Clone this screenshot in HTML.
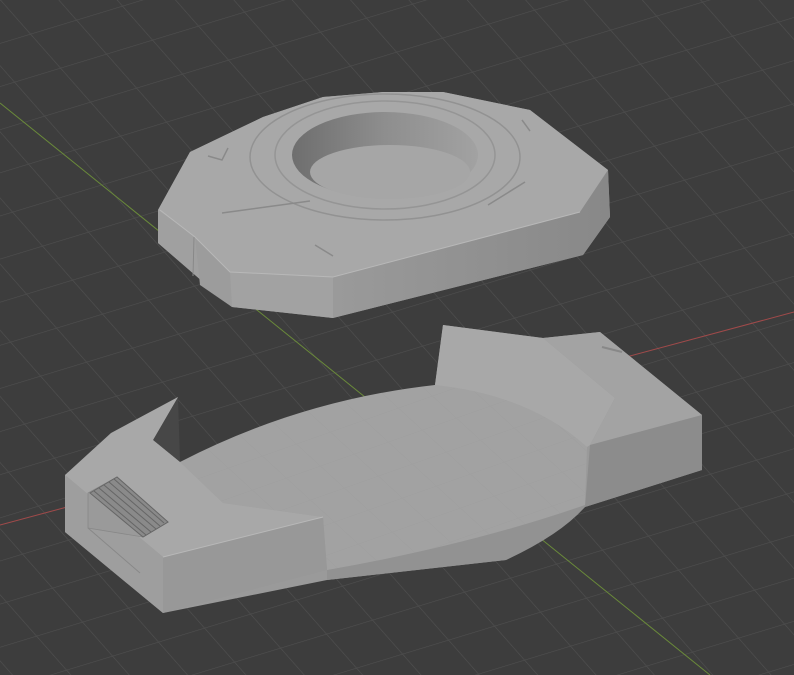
<!DOCTYPE html>
<html><head><meta charset="utf-8"><style>html,body{margin:0;padding:0;background:#3d3d3d;overflow:hidden}svg{display:block}</style></head>
<body>
<svg width="794" height="675" viewBox="0 0 794 675" xmlns="http://www.w3.org/2000/svg">
<defs>
<pattern id="g" width="40" height="40" patternUnits="userSpaceOnUse" patternTransform="matrix(1.15,-0.35,0.75,0.85,0,0)">
<path d="M0 0H40M0 0V40" stroke="#505050" stroke-width="1.1" fill="none"/>
</pattern>
<pattern id="fg" width="40" height="40" patternUnits="userSpaceOnUse" patternTransform="matrix(0.85,-0.3,0.6,0.55,0,0)">
<path d="M0 0H40M0 0V40" stroke="#999" stroke-width="1" fill="none"/>
</pattern>
<linearGradient id="wall" x1="0" x2="1"><stop offset="0" stop-color="#6e6e6e"/><stop offset="0.5" stop-color="#8e8e8e"/><stop offset="1" stop-color="#a2a2a2"/></linearGradient>
<linearGradient id="rside" x1="0" x2="1"><stop offset="0" stop-color="#9a9a9a"/><stop offset="1" stop-color="#888"/></linearGradient>
</defs>
<rect width="794" height="675" fill="#3d3d3d"/>
<rect width="794" height="675" fill="url(#g)"/>
<line x1="0" y1="103" x2="710" y2="675" stroke="#6a8a3a" stroke-width="1"/>
<line x1="0" y1="525" x2="794" y2="312" stroke="#a04a4a" stroke-width="1"/>

<!-- top object -->
<polygon points="158,210 190,152 263,117 323,97 383,92 443,92 530,110 608,170 610,217 583,255 333,318 232,307 158,243" fill="#9a9a9a"/>
<polygon points="158,210 190,152 263,117 323,97 383,92 443,92 530,110 608,170 580,212 333,277 230,272 195,237" fill="#a8a8a8"/>
<polygon points="158,210 195,237 230,272 232,307 158,243" fill="#a0a0a0"/>
<polygon points="195,237 230,272 232,307 200,285" fill="#9c9c9c"/>
<polygon points="230,272 333,277 333,318 232,307" fill="#a2a2a2"/>
<polygon points="333,277 580,212 608,170 610,217 583,255 333,318" fill="url(#rside)"/>
<line x1="194" y1="237" x2="193" y2="276" stroke="#888" stroke-width="1"/>
<ellipse cx="385" cy="157" rx="135" ry="63" fill="none" stroke="#929292" stroke-width="1.5"/>
<ellipse cx="385" cy="155" rx="110" ry="54" fill="none" stroke="#959595" stroke-width="1.5"/>
<ellipse cx="385" cy="155" rx="93" ry="43" fill="url(#wall)"/>
<ellipse cx="390" cy="172" rx="80" ry="27" fill="#a6a6a6"/>
<path d="M208,156 L222,160 L228,148 M222,213 L310,201 M315,245 L333,256 M488,205 L525,182 M522,120 L530,131" stroke="#8a8a8a" stroke-width="1.5" fill="none"/>
<path d="M160,210 L195,237 L230,272 L333,277 L580,212" stroke="#b8b8b8" stroke-width="1" fill="none"/>

<!-- bottom object -->
<polygon points="65,475 178,397 153,440 180,462 435,385 443,325 543,338 600,332 702,415 702,470 585,507 506,560 327,580 163,613 65,532" fill="#9a9a9a"/>
<polygon points="443,325 543,338 615,398 590,445 587,447 435,385" fill="#a8a8a8"/>
<polygon points="543,338 600,332 702,415 590,445 615,398" fill="#a3a3a3"/>
<polygon points="590,445 702,415 702,470 585,507" fill="#8c8c8c"/>
<path d="M585,507 Q560,535 506,560 L327,580 L327,570 Q470,545 585,500Z" fill="#929292"/>
<path d="M180,462 Q300,400 435,385 Q530,395 587,447 L585,505 Q470,545 327,570 L323,517 L223,503 Z" fill="#a2a2a2"/>
<path d="M180,462 Q300,400 435,385 Q530,395 587,447 L585,505 Q470,545 327,570 L323,517 L223,503 Z" fill="url(#fg)" opacity="0.5"/>
<polygon points="178,397 153,440 180,462" fill="#474747"/>
<polygon points="65,475 111,433 178,397 153,440 180,462 223,503 323,517 163,557" fill="#a8a8a8"/>
<polygon points="65,475 163,557 163,613 65,532" fill="#9e9e9e"/>
<polygon points="163,557 323,517 327,570 163,613" fill="#989898"/>
<path d="M163,557 L323,517" stroke="#b8b8b8" stroke-width="1"/>
<polygon points="88,493 117,477 168,522 143,537 88,528" fill="#9a9a9a" stroke="#888" stroke-width="0.8"/>
<polygon points="90,493 117,477 168,522 143,537" fill="#8a8a8a" stroke="#666"/>
<path d="M94,491L146,535M99,488L151,532M104,485L156,529M109,482L160,526M114,479L164,523" stroke="#666" stroke-width="1"/>
<line x1="88" y1="528" x2="140" y2="573" stroke="#888" stroke-width="1"/>
<line x1="602" y1="347" x2="622" y2="352" stroke="#888" stroke-width="2"/>
</svg>
</body></html>
